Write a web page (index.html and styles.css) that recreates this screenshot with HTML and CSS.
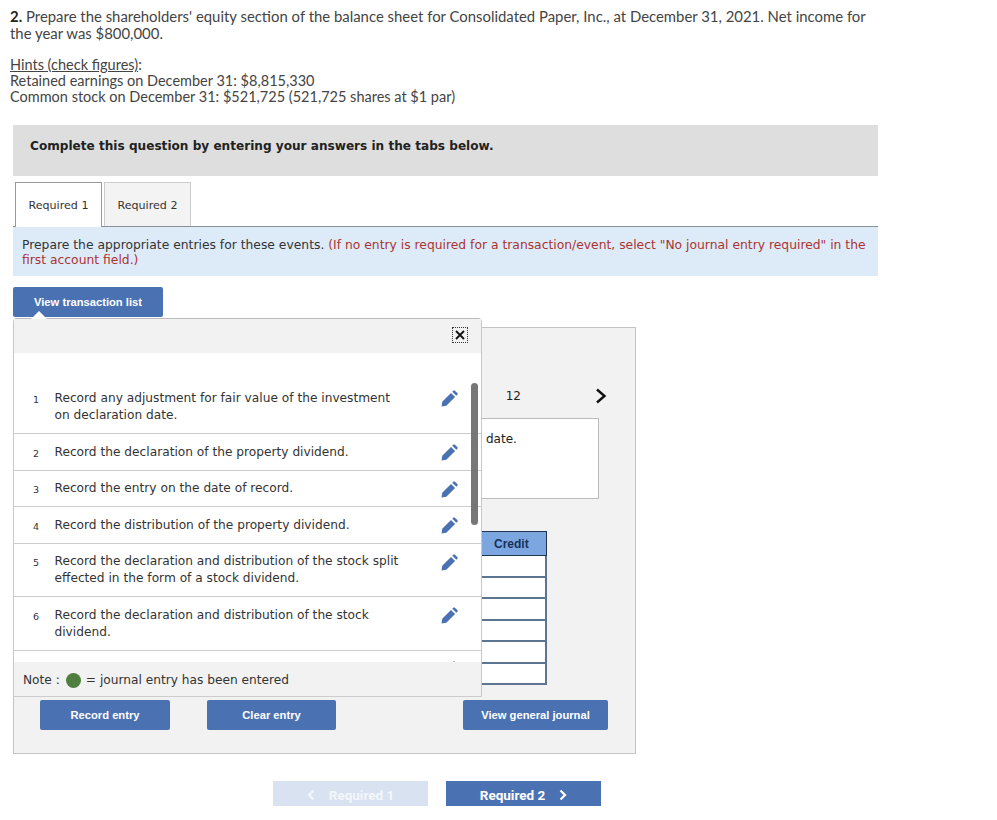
FILE: index.html
```html
<!DOCTYPE html>
<html lang="en">
<head>
    <meta charset="UTF-8">
    <title>Journal entry worksheet</title>
    <link rel="stylesheet" href="styles.css">
</head>
<body>
    <div class="question">
        <p class="prompt"><b>2.</b> Prepare the shareholders' equity section of the balance sheet for Consolidated Paper, Inc., at December 31, 2021. Net income for the year was $800,000.</p>
        <p class="hints"><u>Hints (check figures)</u>:<br>Retained earnings on December 31: $8,815,330<br>Common stock on December 31: $521,725 (521,725 shares at $1 par)</p>
    </div>

    <div class="notice">Complete this question by entering your answers in the tabs below.</div>

    <div class="tabs">
        <div class="tab active">Required 1</div>
        <div class="tab">Required 2</div>
    </div>

    <div class="instructions">Prepare the appropriate entries for these events. <span class="red">(If no entry is required for a transaction/event, select "No journal entry required" in the first account field.)</span></div>

    <button class="btn btn-list">View transaction list</button>

    <div class="worksheet">
        <!-- Worksheet behind the popup -->
        <div class="pager">
            <span class="page-num">12</span>
            <svg class="chevron" width="12" height="16" viewBox="0 0 12 16"><path d="M2 1.5 9.5 8 2 14.5" fill="none" stroke="#111" stroke-width="2.4"/></svg>
        </div>
        <div class="desc">date.</div>
        <div class="grid">
            <div class="grid-head">Credit</div>
            <div class="grid-cell"></div>
            <div class="grid-cell"></div>
            <div class="grid-cell"></div>
            <div class="grid-cell"></div>
            <div class="grid-cell"></div>
            <div class="grid-cell"></div>
        </div>
        <div class="worksheet-btns">
            <button class="btn btn-record">Record entry</button>
            <button class="btn btn-clear">Clear entry</button>
            <button class="btn btn-journal">View general journal</button>
        </div>
    </div>

    <div class="nav-btns">
        <button class="btn-nav disabled">
            <svg width="8" height="12" viewBox="0 0 8 12"><path d="M6.5 1.5 2 6l4.5 4.5" fill="none" stroke="currentColor" stroke-width="2.2"/></svg>
            Required 1
        </button>
        <button class="btn-nav">
            Required 2
            <svg width="8" height="12" viewBox="0 0 8 12"><path d="M1.5 1.5 6 6l-4.5 4.5" fill="none" stroke="currentColor" stroke-width="2.2"/></svg>
        </button>
    </div>

    <!-- Transaction list popup -->
    <div class="popup">
        <span class="caret"></span>
        <div class="popup-top"><span class="close">
            <svg width="10" height="10" viewBox="0 0 10 10"><path d="M1 1 9 9M9 1 1 9" stroke="#111" stroke-width="1.8"/></svg>
        </span></div>
        <div class="popup-list">
            <div class="row"><span class="num">1</span><span class="text">Record any adjustment for fair value of the investment on declaration date.</span>
                <svg class="pen" width="17" height="17" viewBox="0 0 18 18"><path d="M.6 17.4 1.3 12.4 10.6 3.1 14.9 7.4 5.6 16.7Z M11.9 1.8 13 .7a1.2 1.2 0 0 1 1.7 0L17.3 3.3a1.2 1.2 0 0 1 0 1.7L16.2 6.1Z" fill="#4a72b2"/></svg></div>
            <div class="row"><span class="num">2</span><span class="text">Record the declaration of the property dividend.</span>
                <svg class="pen" width="17" height="17" viewBox="0 0 18 18"><path d="M.6 17.4 1.3 12.4 10.6 3.1 14.9 7.4 5.6 16.7Z M11.9 1.8 13 .7a1.2 1.2 0 0 1 1.7 0L17.3 3.3a1.2 1.2 0 0 1 0 1.7L16.2 6.1Z" fill="#4a72b2"/></svg></div>
            <div class="row"><span class="num">3</span><span class="text">Record the entry on the date of record.</span>
                <svg class="pen" width="17" height="17" viewBox="0 0 18 18"><path d="M.6 17.4 1.3 12.4 10.6 3.1 14.9 7.4 5.6 16.7Z M11.9 1.8 13 .7a1.2 1.2 0 0 1 1.7 0L17.3 3.3a1.2 1.2 0 0 1 0 1.7L16.2 6.1Z" fill="#4a72b2"/></svg></div>
            <div class="row"><span class="num">4</span><span class="text">Record the distribution of the property dividend.</span>
                <svg class="pen" width="17" height="17" viewBox="0 0 18 18"><path d="M.6 17.4 1.3 12.4 10.6 3.1 14.9 7.4 5.6 16.7Z M11.9 1.8 13 .7a1.2 1.2 0 0 1 1.7 0L17.3 3.3a1.2 1.2 0 0 1 0 1.7L16.2 6.1Z" fill="#4a72b2"/></svg></div>
            <div class="row"><span class="num">5</span><span class="text">Record the declaration and distribution of the stock split effected in the form of a stock dividend.</span>
                <svg class="pen" width="17" height="17" viewBox="0 0 18 18"><path d="M.6 17.4 1.3 12.4 10.6 3.1 14.9 7.4 5.6 16.7Z M11.9 1.8 13 .7a1.2 1.2 0 0 1 1.7 0L17.3 3.3a1.2 1.2 0 0 1 0 1.7L16.2 6.1Z" fill="#4a72b2"/></svg></div>
            <div class="row"><span class="num">6</span><span class="text">Record the declaration and distribution of the stock dividend.</span>
                <svg class="pen" width="17" height="17" viewBox="0 0 18 18"><path d="M.6 17.4 1.3 12.4 10.6 3.1 14.9 7.4 5.6 16.7Z M11.9 1.8 13 .7a1.2 1.2 0 0 1 1.7 0L17.3 3.3a1.2 1.2 0 0 1 0 1.7L16.2 6.1Z" fill="#4a72b2"/></svg></div>
            <!-- Next row is scrolled out of view, only the top of its pencil shows -->
            <div class="row row-cut">
                <svg class="pen" width="17" height="17" viewBox="0 0 18 18"><path d="M.6 17.4 1.3 12.4 10.6 3.1 14.9 7.4 5.6 16.7Z M11.9 1.8 13 .7a1.2 1.2 0 0 1 1.7 0L17.3 3.3a1.2 1.2 0 0 1 0 1.7L16.2 6.1Z" fill="#4a72b2"/></svg></div>
            <div class="scrollbar"></div>
        </div>
        <div class="popup-note"><span>Note :</span><span class="dot"></span><span>= journal entry has been entered</span></div>
    </div>
</body>
</html>
```

FILE: styles.css
```css
/* Page */
body {
    margin: 0;
    height: 820px;
    overflow: hidden;
    position: relative;
    background-color: #fff;
    font-family: "DejaVu Sans", Verdana, sans-serif;
    color: #333;
}

/* The question text */
.question {
    padding: 8px 120px 0 10px;
    font-family: Lato, "Open Sans", sans-serif;
    font-size: 14.5px;
    line-height: 16px;
    color: #444;
}

.prompt {
    margin: 0;
    font-size: 14.9px;
    line-height: 17px;
}

.prompt b {
    color: #222;
}

.hints {
    margin: 15px 0 0;
}

/* Grey notice */
.notice {
    margin: 20px 119px 0 13px;
    height: 51px;
    padding: 14px 17px 0;
    box-sizing: border-box;
    background-color: #dedede;
    font-size: 12.1px;
    font-weight: bold;
    color: #222;
}

/* Tabs */
.tabs {
    display: flex;
    gap: 2px;
    margin: 6px 119px 0 13px;
    padding-left: 2px;
    height: 44px;
    border-bottom: 1px solid #8a9099;
}

.tab {
    width: 87px;
    height: 44px;
    box-sizing: border-box;
    border: 1px solid #ccc;
    border-bottom: none;
    background-color: #f3f3f3;
    font-size: 11.1px;
    line-height: 45px;
    text-align: center;
}

.tab.active {
    height: 45px;
    background-color: #fff;
    border-color: #9a9a9a;
}

/* Instructions */
.instructions {
    margin: 0 119px 0 13px;
    padding: 11px 9px 6px;
    height: 32px;
    background-color: #ddebf8;
    font-size: 12.33px;
    line-height: 15px;
    color: #333;
}

.red {
    color: #a33;
}

/* Buttons */
.btn {
    display: block;
    border: none;
    border-radius: 2px;
    background-color: #4a72b2;
    color: #fff;
    font-family: "Liberation Sans", Arial, sans-serif;
    font-size: 11.2px;
    font-weight: bold;
    height: 30px;
    padding: 0;
}

.btn-list {
    margin: 11px 0 0 13px;
    width: 150px;
}

/* Worksheet behind the popup */
.worksheet {
    margin: 10px 0 0 13px;
    width: 621px;
    height: 425px;
    border: 1px solid #c4c4c4;
    background-color: #f2f2f2;
    font-size: 12px;
}

.pager {
    display: flex;
    justify-content: flex-end;
    align-items: center;
    height: 16px;
    margin-top: 60px;
    padding-right: 28px;
    color: #222;
}

.page-num {
    margin-right: 74px;
}

.desc {
    width: 118px;
    height: 81px;
    box-sizing: border-box;
    margin: 14px 0 0 467px;
    padding: 13px 0 0 4px;
    background-color: #fff;
    border: 1px solid #bbb;
    color: #222;
}

.grid {
    width: 86px;
    margin: 32px 0 0 447px;
}

.grid-head {
    height: 25px;
    box-sizing: border-box;
    padding-left: 32px;
    background-color: #7ca6e0;
    border: 1px solid #1f3550;
    font-family: "Liberation Sans", Arial, sans-serif;
    font-size: 12px;
    font-weight: bold;
    line-height: 24px;
    color: #16325c;
}

.grid-cell {
    height: 21.5px;
    box-sizing: border-box;
    background-color: #fff;
    border-right: 2px solid #5d7590;
    border-bottom: 2px solid #5d7590;
}

.worksheet-btns {
    position: relative;
    height: 30px;
    margin: 15px 0 0 26px;
    display: flex;
}

.btn-record {
    width: 130px;
}

.btn-clear {
    width: 129px;
    margin-left: 37px;
}

.btn-journal {
    width: 145px;
    margin-left: 127px;
}

/* Bottom navigation */
.nav-btns {
    display: flex;
    gap: 18px;
    margin: 27px 0 0 273px;
}

.btn-nav {
    display: flex;
    align-items: center;
    justify-content: center;
    gap: 14px;
    width: 155px;
    height: 25px;
    border: none;
    padding: 2px 0 0;
    background-color: #4a72b2;
    color: #fff;
    font-family: Roboto, "Liberation Sans", sans-serif;
    font-size: 13.5px;
    font-weight: bold;
}

.btn-nav.disabled {
    background-color: #d8e2f0;
    color: #f4f6fa;
}

/* Popup over the worksheet */
.popup {
    position: absolute;
    left: 13px;
    top: 318px;
    width: 469px;
    height: 379px;
    box-sizing: border-box;
    border: 1px solid #c8c8c8;
    border-top-color: #bbb;
    border-radius: 4px 4px 0 0;
    background-color: #fff;
    font-size: 12.2px;
    color: #333;
}

.caret {
    position: absolute;
    left: 17px;
    top: -8px;
    border-left: 8px solid transparent;
    border-right: 8px solid transparent;
    border-bottom: 8px solid #fff;
}

.popup-top {
    height: 34px;
    background-color: #f2f2f2;
    position: relative;
}

.close {
    position: absolute;
    left: 438px;
    top: 8px;
    width: 14px;
    height: 14px;
    display: flex;
    align-items: center;
    justify-content: center;
    border: 1px dotted #333;
}

.popup-list {
    height: 309px;
    padding-top: 27.4px;
    box-sizing: border-box;
    overflow: hidden;
    position: relative;
}

.row {
    display: flex;
    padding: 9.6px 0 9px 19px;
    line-height: 17px;
    border-bottom: 1px solid #ccc;
    position: relative;
}

.row-cut {
    height: 40px;
    border-bottom: none;
}

.num {
    width: 21.5px;
    flex: none;
    font-size: 9.5px;
    line-height: 19px;
    height: 17px;
}

.text {
    width: 350px;
}

.pen {
    position: absolute;
    left: 427px;
    top: 10px;
}

.scrollbar {
    position: absolute;
    left: 457px;
    top: 30px;
    width: 7px;
    height: 142px;
    border-radius: 4px;
    background-color: #777;
}

.popup-note {
    height: 35px;
    padding: 11px 0 0 9px;
    box-sizing: border-box;
    background-color: #f2f2f2;
    border-bottom: 1px solid #ccc;
    display: flex;
    align-items: flex-start;
    gap: 5px;
}

.dot {
    width: 15px;
    height: 15px;
    margin: 0 0 0 1px;
    border-radius: 50%;
    background-color: #4f7f3f;
}
```
